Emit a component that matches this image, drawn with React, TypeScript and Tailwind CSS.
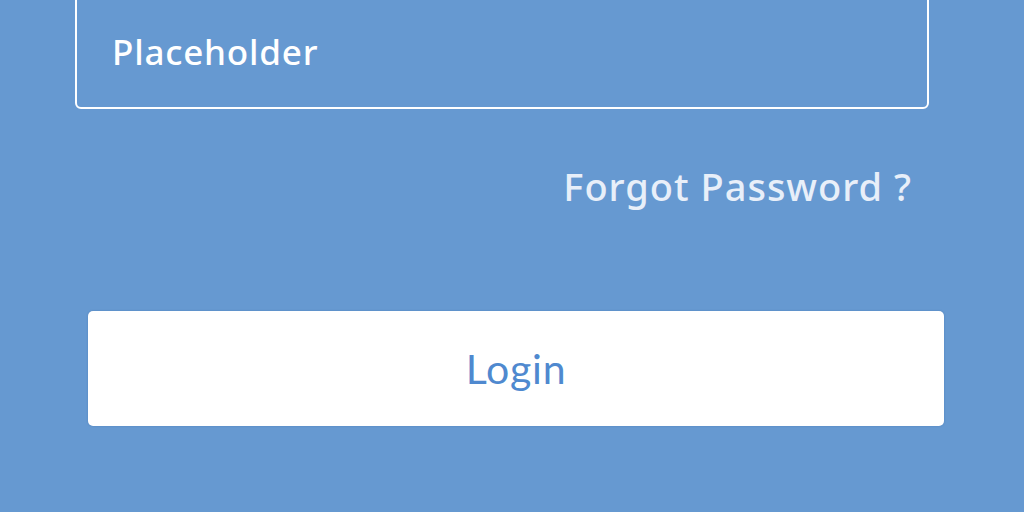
export default function App() {
  return (
    <div className="w-[1024px] h-[512px] overflow-hidden bg-[#6699d1]">
      <div className="ml-[75px] w-[854px] mt-[-12px] h-[121px] border-2 border-white rounded-[6px] flex items-center pl-[35px] pt-[6px]">
        <span className="text-white text-[35px] font-medium tracking-[0.8px] font-['Noto_Sans',sans-serif] leading-none">Placeholder</span>
      </div>
      <div className="ml-[75px] w-[854px] flex justify-end pr-[17px] mt-[58px]">
        <span className="text-[#e8eff9] text-[38px] font-medium tracking-[1px] font-['Noto_Sans',sans-serif] leading-none">Forgot Password ?</span>
      </div>
      <button className="ml-[88px] mt-[106px] w-[856px] h-[115px] bg-white rounded-[5px] flex items-center justify-center shadow-[0_0_2px_rgba(40,80,140,0.35)]">
        <span className="text-[#4f89cf] text-[41px] tracking-[0.8px] font-['Lato',sans-serif] leading-none">Login</span>
      </button>
    </div>
  )
}
